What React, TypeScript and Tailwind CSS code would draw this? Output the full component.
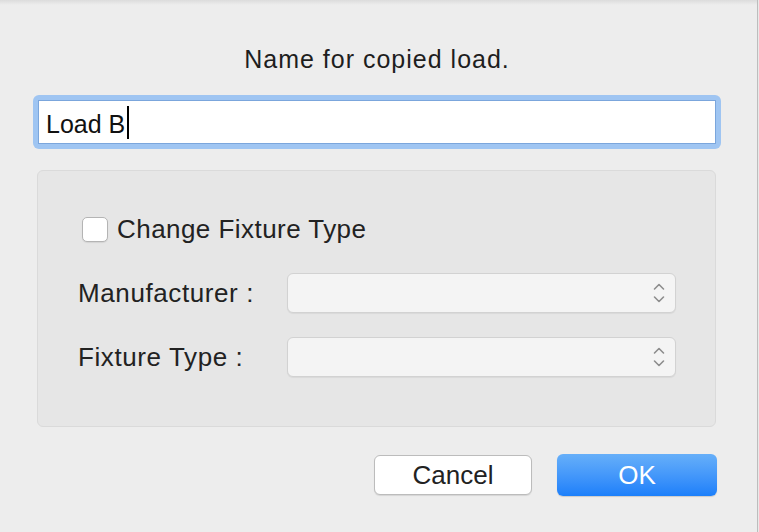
import React from "react"

const font = { fontFamily: '"Liberation Sans", Arial, sans-serif' }

function Chevrons() {
  return (
    <svg width="12" height="22" viewBox="0 0 12 22" fill="none" stroke="#8d8d8d" strokeWidth="1.6" strokeLinecap="round" strokeLinejoin="round">
      <path d="M1.5 7 L6 2.5 L10.5 7" />
      <path d="M1.5 15 L6 19.5 L10.5 15" />
    </svg>
  )
}

function PopupRow({ label }: { label: string }) {
  return (
    <div className="flex items-center h-[40px]">
      <div className="w-[209px] text-[26px] tracking-[0.6px] text-[#222]">{label}</div>
      <div className="flex-1 h-[40px] rounded-[6px] border border-[#d2d2d2] bg-[#f4f4f4] shadow-[0_1px_1px_rgba(0,0,0,0.06)] flex items-center justify-end pr-[10px]">
        <Chevrons />
      </div>
    </div>
  )
}

export default function App() {
  return (
    <div className="w-[759px] h-[532px] flex bg-[#ededed] overflow-hidden" style={font}>
      <div className="w-[757px] h-full flex flex-col">
        <div className="h-[5px] bg-gradient-to-b from-[#dcdcdc] to-[#ededed]" />
        <div className="flex flex-col pl-[33px] pr-[36px]">
          <div className="mt-[40px] h-[28px] leading-[28px] text-center text-[25px] tracking-[1px] text-[#1e1e1e]">
            Name for copied load.
          </div>

          <div className="mt-[22px] rounded-[6px] bg-[#9fc5f2] p-[5px]">
            <div className="h-[44px] border border-[#7ba6dc] bg-white flex items-start pl-[7px]">
              <span className="pt-[4px] leading-[38px] text-[25px] text-[#111]">Load B</span>
              <span className="mt-[5px] ml-[2px] w-[2px] h-[33px] bg-black" />
            </div>
          </div>

          <div className="mt-[21px] ml-[4px] mr-[5px] h-[257px] rounded-[6px] border border-[#dadada] bg-[#e6e6e6] pt-[43px] pl-[40px] pr-[39px]">
            <div className="flex items-center h-[30px] pl-[4px]">
              <div className="w-[26px] h-[25px] rounded-[5px] border border-[#b4b4b4] bg-white shadow-[0_1px_1px_rgba(0,0,0,0.08)]" />
              <span className="ml-[9px] text-[26px] tracking-[0.45px] text-[#222]">Change Fixture Type</span>
            </div>
            <div className="mt-[29px]">
              <PopupRow label="Manufacturer :" />
            </div>
            <div className="mt-[24px]">
              <PopupRow label="Fixture Type :" />
            </div>
          </div>

          <div className="mt-[27px] mr-[4px] flex justify-end items-center gap-[25px]">
            <button className="w-[158px] h-[40px] rounded-[6px] border border-[#bcbcbc] bg-white text-[26px] text-[#222] shadow-[0_1px_1px_rgba(0,0,0,0.1)]">
              Cancel
            </button>
            <button className="w-[160px] h-[42px] rounded-[6px] bg-gradient-to-b from-[#66aff9] to-[#1b7ffa] text-[26px] text-white shadow-[0_1px_1px_rgba(0,0,0,0.15)]">
              OK
            </button>
          </div>
        </div>
      </div>
      <div className="w-px h-full bg-[#bdbdbd]" />
      <div className="w-px h-full bg-[#e9e9e9]" />
    </div>
  )
}
